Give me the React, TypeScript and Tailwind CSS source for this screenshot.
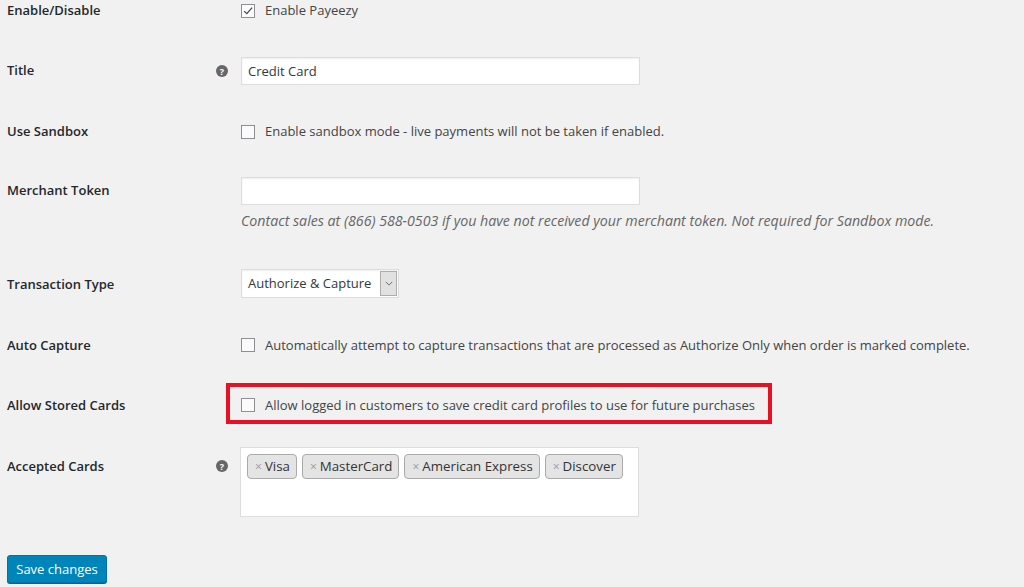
import React from "react";

const font = { fontFamily: '"Open Sans", "Noto Sans", sans-serif' };

const HelpTip = () => (
  <span className="flex h-[12px] w-[12px] items-center justify-center rounded-full bg-[#666] text-[9px] font-bold leading-none text-white">
    ?
  </span>
);

const Checkbox = ({ checked = false }: { checked?: boolean }) => (
  <span className="relative flex h-[14px] w-[14px] shrink-0 items-center justify-center border border-[#8c8f94] bg-[#fbfbfb]">
    {checked && (
      <svg viewBox="0 0 14 14" className="h-[12px] w-[12px]">
        <path d="M2.5 7.2 L5.6 10.2 L11.8 3" fill="none" stroke="#444" strokeWidth="1.4" />
      </svg>
    )}
  </span>
);

interface RowProps {
  label: string;
  help?: boolean;
  className?: string;
  children: React.ReactNode;
}

const Row = ({ label, help, className = "", children }: RowProps) => (
  <div className={`flex items-start ${className}`}>
    <div className="flex h-[28px] w-[216px] items-center pl-[7px] text-[13px] font-semibold text-[#23282d]">
      {label}
    </div>
    <div className="flex h-[28px] w-[15px] items-center">{help && <HelpTip />}</div>
    <div className="ml-[10px] flex-1">{children}</div>
  </div>
);

const CheckLabel = ({ checked, text }: { checked?: boolean; text: string }) => (
  <label className="flex h-[28px] items-center gap-[10px] whitespace-nowrap text-[13px] text-[#444]">
    <Checkbox checked={checked} />
    <span>{text}</span>
  </label>
);

const Tag = ({ name }: { name: string }) => (
  <span className="flex h-[25px] items-center whitespace-nowrap rounded-[4px] border border-[#aaa] bg-[#e4e4e4] pl-[7px] pr-[6px] text-[13.3px] text-[#333]">
    <span className="mr-[3px] text-[12px] text-[#999]">×</span>
    {name}
  </span>
);

export default function App() {
  return (
    <div className="h-[587px] w-[1024px] overflow-hidden bg-[#f1f1f1]" style={font}>
      <div className="flex flex-col">
        <Row label="Enable/Disable" className="-mt-[3px]">
          <CheckLabel checked text="Enable Payeezy" />
        </Row>

        <Row label="Title" help className="mt-[32px]">
          <input
            readOnly
            value="Credit Card"
            className="h-[28px] w-[399px] border border-[#ddd] bg-white px-[6px] text-[13px] text-[#32373c] shadow-[inset_0_1px_2px_rgba(0,0,0,0.07)] outline-none"
          />
        </Row>

        <Row label="Use Sandbox" className="mt-[33px]">
          <CheckLabel text="Enable sandbox mode - live payments will not be taken if enabled." />
        </Row>

        <Row label="Merchant Token" className="mt-[31px]">
          <input
            readOnly
            value=""
            className="h-[28px] w-[399px] border border-[#ddd] bg-white px-[6px] text-[13px] shadow-[inset_0_1px_2px_rgba(0,0,0,0.07)] outline-none"
          />
          <p className="mt-[5px] whitespace-nowrap text-[14.2px] italic text-[#666]">
            Contact sales at (866) 588-0503 if you have not received your merchant token. Not required for Sandbox mode.
          </p>
        </Row>

        <Row label="Transaction Type" className="mt-[39px]">
          <div className="-mt-[1px] flex h-[29px] w-[158px] items-stretch border border-[#ddd] bg-white shadow-[inset_0_1px_2px_rgba(0,0,0,0.07)]">
            <span className="flex flex-1 items-center whitespace-nowrap pl-[6px] text-[13px] text-[#32373c]">
              Authorize &amp; Capture
            </span>
            <span className="my-[1px] mr-[1px] flex w-[17px] items-center justify-center border border-[#adadad] bg-[#e1e1e1]">
              <svg viewBox="0 0 10 6" className="h-[5px] w-[8px]">
                <path d="M1 1 L5 5 L9 1" fill="none" stroke="#555" strokeWidth="1" />
              </svg>
            </span>
          </div>
        </Row>

        <Row label="Auto Capture" className="mt-[33px]">
          <CheckLabel text="Automatically attempt to capture transactions that are processed as Authorize Only when order is marked complete." />
        </Row>

        <Row label="Allow Stored Cards" className="mt-[32px]">
          <div className="relative">
            <CheckLabel text="Allow logged in customers to save credit card profiles to use for future purchases" />
            <span className="pointer-events-none absolute -left-[15px] -top-[8px] h-[41px] w-[546px] border-[4px] border-[#e81123]" />
          </div>
        </Row>

        <Row label="Accepted Cards" help className="mt-[33px]">
          <div className="-ml-[1px] -mt-[5px] flex h-[70px] w-[399px] flex-wrap content-start gap-[5px] border border-[#ddd] bg-white px-[6px] pt-[6px]">
            <Tag name="Visa" />
            <Tag name="MasterCard" />
            <Tag name="American Express" />
            <Tag name="Discover" />
          </div>
        </Row>

        <div className="mt-[38px] pl-[7px]">
          <button className="h-[28px] w-[100px] rounded-[3px] border border-[#0073aa] bg-[#0085ba] text-[13px] text-white shadow-[0_1px_0_#006799]">
            Save changes
          </button>
        </div>
      </div>
    </div>
  );
}
